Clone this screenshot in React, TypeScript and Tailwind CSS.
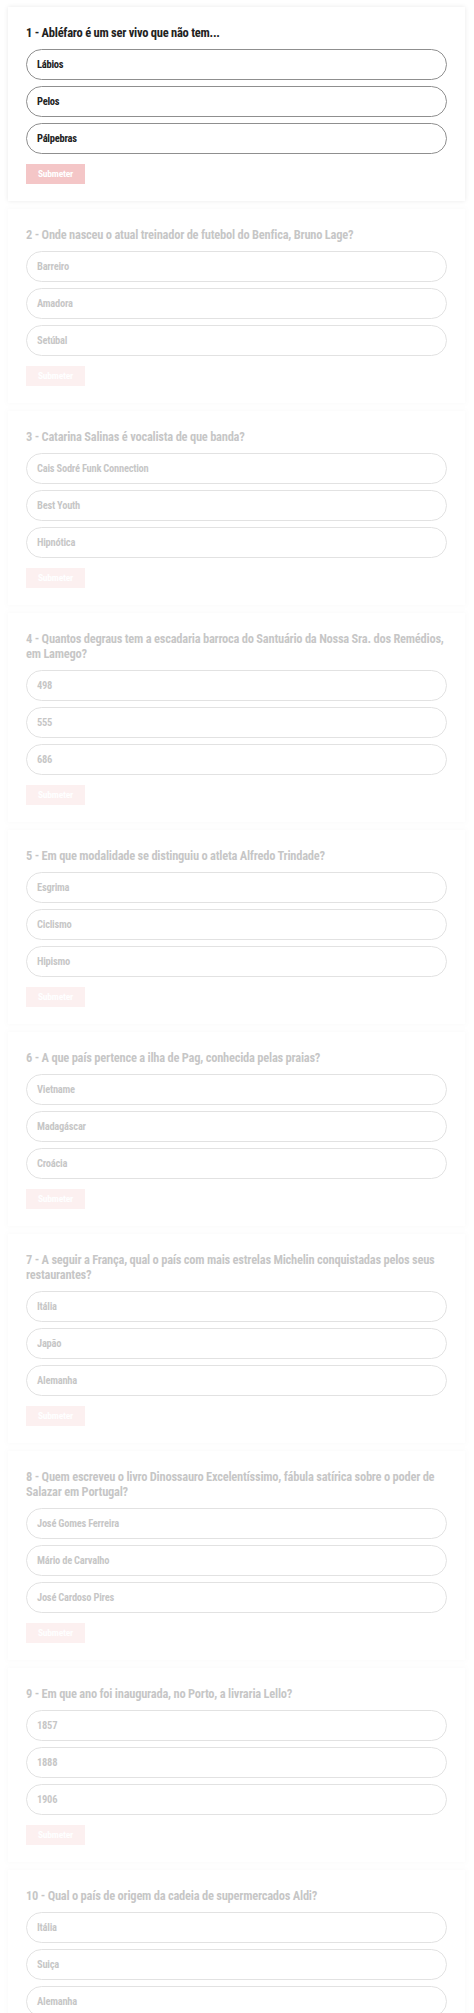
const FONT = "font-['Roboto_Condensed','Liberation_Sans_Narrow','DejaVu_Sans_Condensed',Roboto,sans-serif]";

const questions = [
  {
    title: "1 - Abléfaro é um ser vivo que não tem...",
    options: ["Lábios", "Pelos", "Pálpebras"],
  },
  {
    title: "2 - Onde nasceu o atual treinador de futebol do Benfica, Bruno Lage?",
    options: ["Barreiro", "Amadora", "Setúbal"],
  },
  {
    title: "3 - Catarina Salinas é vocalista de que banda?",
    options: ["Cais Sodré Funk Connection", "Best Youth", "Hipnótica"],
  },
  {
    title: "4 - Quantos degraus tem a escadaria barroca do Santuário da Nossa Sra. dos Remédios, em Lamego?",
    options: ["498", "555", "686"],
  },
  {
    title: "5 - Em que modalidade se distinguiu o atleta Alfredo Trindade?",
    options: ["Esgrima", "Ciclismo", "Hipismo"],
  },
  {
    title: "6 - A que país pertence a ilha de Pag, conhecida pelas praias?",
    options: ["Vietname", "Madagáscar", "Croácia"],
  },
  {
    title: "7 - A seguir a França, qual o país com mais estrelas Michelin conquistadas pelos seus restaurantes?",
    options: ["Itália", "Japão", "Alemanha"],
  },
  {
    title: "8 - Quem escreveu o livro Dinossauro Excelentíssimo, fábula satírica sobre o poder de Salazar em Portugal?",
    options: ["José Gomes Ferreira", "Mário de Carvalho", "José Cardoso Pires"],
  },
  {
    title: "9 - Em que ano foi inaugurada, no Porto, a livraria Lello?",
    options: ["1857", "1888", "1906"],
  },
  {
    title: "10 - Qual o país de origem da cadeia de supermercados Aldi?",
    options: ["Itália", "Suiça", "Alemanha"],
  },
];

function QuestionCard({ title, options, active }: { title: string; options: string[]; active: boolean }) {
  return (
    <div
      className={
        "bg-white px-[18px] pt-[18px] pb-[17px] shadow-[0_0_5px_rgba(0,0,0,0.09)] " +
        (active ? "" : "opacity-25")
      }
    >
      <h2 className="text-[12.5px] leading-[15px] tracking-[-0.25px] font-bold text-[#222] mb-[9px] mr-[-4px]">
        {title}
      </h2>
      <div className="flex flex-col gap-[6px]">
        {options.map((o) => (
          <div
            key={o}
            className="h-[31px] rounded-full border border-[#8f8f8f] flex items-center px-[10px] text-[10.5px] tracking-[-0.25px] font-bold text-[#222]"
          >
            {o}
          </div>
        ))}
      </div>
      <button className="mt-[10px] h-[20px] w-[59px] bg-[#f4c6c7] text-white text-[9.5px] tracking-[-0.2px] font-bold flex items-center justify-center">
        Submeter
      </button>
    </div>
  );
}

export default function App() {
  return (
    <div className={"bg-white min-h-screen pt-[7px] pl-[8px] pr-[9px] flex flex-col gap-[8px] " + FONT}>
      {questions.map((q, i) => (
        <QuestionCard key={i} title={q.title} options={q.options} active={i === 0} />
      ))}
    </div>
  );
}
